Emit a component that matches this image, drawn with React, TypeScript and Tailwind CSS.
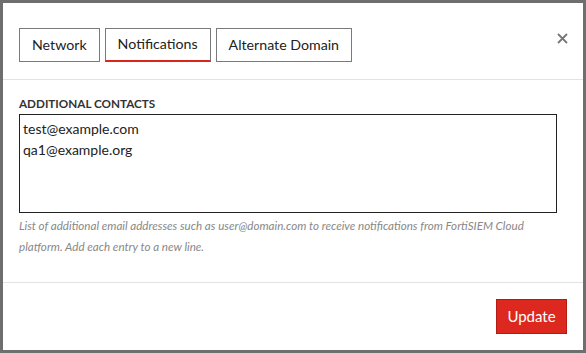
import React, { useState } from "react";

const tabs = ["Network", "Notifications", "Alternate Domain"];

export default function App() {
  const [active, setActive] = useState("Notifications");
  const [contacts, setContacts] = useState("test@example.com\nqa1@example.org");

  return (
    <div
      className="w-[586px] h-[353px] bg-[#6e6e6e] p-[3px]"
      style={{ fontFamily: "Lato, 'Open Sans', sans-serif" }}
    >
      <div className="w-full h-full bg-white flex flex-col">
        {/* Header with tabs */}
        <div className="h-[77px] border-b border-[#e3e3e3] flex items-start justify-between pl-4 pr-[13px] pt-[25px]">
          <div className="flex gap-[5px]">
            {tabs.map((t) => (
              <button
                key={t}
                onClick={() => setActive(t)}
                className={`h-[34px] px-3 text-[14.2px] text-[#222] border border-[#7a7a7a] leading-none ${
                  active === t ? "border-b-2 border-b-[#d9261c]" : ""
                }`}
              >
                {t}
              </button>
            ))}
          </div>
          <button className="mt-[2px] w-[16px] h-[16px] flex items-center justify-center">
            <svg width="11" height="11" viewBox="0 0 11 11">
              <path d="M1 1 L10 10 M10 1 L1 10" stroke="#777" strokeWidth="1.8" />
            </svg>
          </button>
        </div>

        {/* Body */}
        <div className="flex-1 px-4 pt-[16px]">
          <label className="block text-[11.7px] font-bold text-[#333] leading-[14px] mb-[4px]">
            ADDITIONAL CONTACTS
          </label>
          <textarea
            value={contacts}
            onChange={(e) => setContacts(e.target.value)}
            className="block w-[538px] h-[99px] border border-[#222] px-[3px] pt-[3px] text-[14px] leading-[21px] text-[#222] resize-none outline-none"
          />
          <p className="mt-[2px] text-[11.6px] italic text-[#888] leading-[21px] pr-6">
            List of additional email addresses such as user@domain.com to receive notifications from FortiSIEM Cloud platform. Add each entry to a new line.
          </p>
        </div>

        {/* Footer */}
        <div className="h-[68px] border-t border-[#e3e3e3] flex items-start justify-end pr-4 pt-[16px]">
          <button className="w-[71px] h-[35px] bg-[#dc281e] border border-[#b31c15] text-white text-[15px]">
            Update
          </button>
        </div>
      </div>
    </div>
  );
}
